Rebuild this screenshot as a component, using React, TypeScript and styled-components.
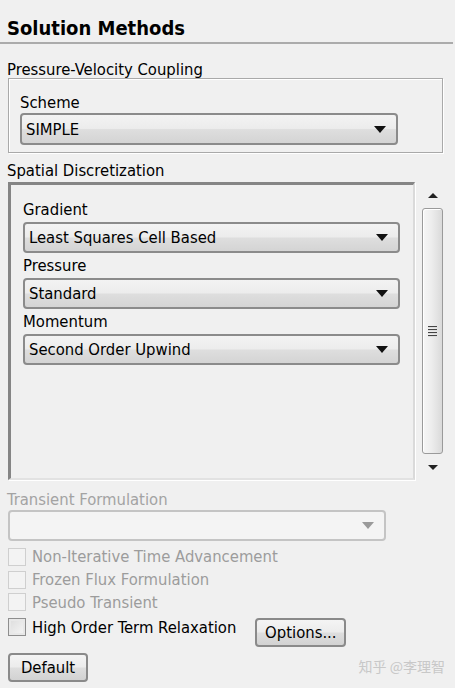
import React from 'react'
import styled, { createGlobalStyle } from 'styled-components'

const GlobalStyle = createGlobalStyle`
  html, body {
    margin: 0;
    padding: 0;
    background: #f0f0f0;
  }
  body {
    font-family: "DejaVu Sans Condensed", "DejaVu Sans", Tahoma, sans-serif;
    color: #000;
  }
`

const Page = styled.div`
  width: 455px;
  height: 688px;
  position: relative;
  overflow: hidden;
  background: #f0f0f0;
`

const Title = styled.div`
  height: 44px;
  padding-left: 7px;
  box-sizing: border-box;
  padding-top: 15px;
  font-size: 20px;
  font-weight: bold;
  line-height: 26px;
  border-bottom: 2px solid #ababab;
  margin-right: 2px;
`

const SectionLabel = styled.div<{ disabled?: boolean }>`
  padding-left: 7px;
  font-size: 16.5px;
  line-height: 19px;
  height: 18px;
  color: ${p => p.disabled ? '#a3a3a3' : '#000'};
`

const GroupBox = styled.div`
  margin-left: 8px;
  width: 435px;
  height: 75px;
  box-sizing: border-box;
  border: 1px solid #a9a9a9;
  box-shadow: inset 1px 1px 0 #fff, 1px 1px 0 #fff;
  padding: 14px 0 0 11px;
`

const FieldLabel = styled.div`
  font-size: 16.5px;
  line-height: 19px;
  height: 20px;
`

const Combo = styled.div<{ w: number, h?: number, disabled?: boolean }>`
  width: ${p => p.w}px;
  height: ${p => p.h ?? 31}px;
  box-sizing: border-box;
  border: 2px solid ${p => p.disabled ? '#c4c4c4' : '#8b8b8b'};
  border-radius: 4px;
  background: ${p => p.disabled
    ? '#f4f4f4'
    : 'linear-gradient(#f3f3f3 0%, #ececec 48%, #dedede 52%, #d4d4d4 100%)'};
  display: flex;
  align-items: center;
  justify-content: space-between;
  padding: 0 10px 0 4px;
  font-size: 16.5px;
  color: ${p => p.disabled ? '#a0a0a0' : '#000'};
`

const Arrow = styled.span<{ disabled?: boolean }>`
  width: 0;
  height: 0;
  border-left: 6px solid transparent;
  border-right: 6px solid transparent;
  border-top: 7px solid ${p => p.disabled ? '#9a9a9a' : '#111'};
`

const SpatialRow = styled.div`
  display: flex;
  gap: 7px;
  margin-left: 8px;
  margin-top: 3px;
  height: 298px;
`

const SunkenPanel = styled.div`
  width: 407px;
  box-sizing: border-box;
  border-top: 3px solid #858585;
  border-left: 3px solid #858585;
  border-right: 2px solid #dadada;
  border-bottom: 2px solid #e2e2e2;
  box-shadow: 1px 1px 0 #fff;
  padding: 15px 0 0 12px;
  display: flex;
  flex-direction: column;
`

const PanelLabel = styled.div`
  font-size: 16.5px;
  line-height: 19px;
  height: 19px;
  margin-bottom: 3px;
`

const FieldGap = styled.div`
  height: 3px;
`

const ScrollBar = styled.div`
  width: 21px;
  display: flex;
  flex-direction: column;
  align-items: center;
  background: #f0f0f0;
`

const ScrollBtn = styled.div`
  height: 26px;
  width: 21px;
  display: flex;
  align-items: center;
  justify-content: center;
`

const ArrowUp = styled.span`
  width: 0;
  height: 0;
  border-left: 5px solid transparent;
  border-right: 5px solid transparent;
  border-bottom: 5px solid #222;
`

const ArrowDown = styled.span`
  width: 0;
  height: 0;
  border-left: 5px solid transparent;
  border-right: 5px solid transparent;
  border-top: 5px solid #222;
`

const Thumb = styled.div`
  flex: 1;
  width: 21px;
  box-sizing: border-box;
  border: 1px solid #9a9a9a;
  border-radius: 3px;
  background: linear-gradient(90deg, #f6f6f6 0%, #ededed 45%, #dadada 100%);
  box-shadow: inset 1px 1px 0 #fff;
  display: flex;
  flex-direction: column;
  align-items: center;
  justify-content: center;
  gap: 2px;
`

const Grip = styled.span`
  width: 9px;
  height: 1px;
  background: #444;
  box-shadow: 0 1px 0 #ddd;
`

const TransientBlock = styled.div`
  margin-top: 10px;
`

const DisabledCombo = styled.div`
  margin-left: 8px;
  margin-top: 2px;
`

const CheckList = styled.div`
  margin-top: 4px;
  display: flex;
  flex-direction: column;
`

const CheckRow = styled.div<{ h: number }>`
  display: flex;
  align-items: center;
  height: ${p => p.h}px;
  padding-left: 8px;
`

const Box = styled.span<{ disabled?: boolean }>`
  width: 18px;
  height: 18px;
  box-sizing: border-box;
  border: 1px solid ${p => p.disabled ? '#cfcfcf' : '#8e8e8e'};
  background: ${p => p.disabled
    ? '#f3f3f3'
    : 'linear-gradient(135deg, #dcdcdc, #f6f6f6)'};
  box-shadow: ${p => p.disabled ? 'none' : 'inset 0 0 0 2px #e8e8e8'};
  margin-right: 6px;
  flex-shrink: 0;
`

const CheckText = styled.span<{ disabled?: boolean }>`
  font-size: 16.5px;
  color: ${p => p.disabled ? '#9c9c9c' : '#000'};
`

const Button = styled.button<{ w: number }>`
  width: ${p => p.w}px;
  height: 29px;
  box-sizing: border-box;
  border: 2px solid #8a8a8a;
  border-radius: 4px;
  background: linear-gradient(#f4f4f4 0%, #ececec 48%, #dedede 52%, #d2d2d2 100%);
  font-family: inherit;
  font-size: 16.5px;
  color: #000;
  padding: 0;
`

const OptionsBtn = styled(Button)`
  margin-left: 19px;
  margin-top: 10px;
`

const Footer = styled.div`
  margin-top: 12px;
  padding-left: 8px;
`

const Watermark = styled.div`
  position: absolute;
  right: 10px;
  bottom: 12px;
  font-family: "Noto Sans CJK SC", sans-serif;
  font-size: 14px;
  color: #c8c8c8;
`

const Dropdown: React.FC<{ value?: string, w: number, h?: number, disabled?: boolean }> = ({ value, w, h, disabled }) => (
  <Combo w={w} h={h} disabled={disabled}>
    <span>{value}</span>
    <Arrow disabled={disabled} />
  </Combo>
)

const App: React.FC = () => {
  return (
    <Page>
      <GlobalStyle />
      <Title>Solution Methods</Title>
      <div style={{ height: 16 }} />
      <SectionLabel>Pressure-Velocity Coupling</SectionLabel>
      <GroupBox>
        <FieldLabel>Scheme</FieldLabel>
        <Dropdown w={378} h={32} value="SIMPLE" />
      </GroupBox>
      <div style={{ height: 8 }} />
      <SectionLabel>Spatial Discretization</SectionLabel>
      <SpatialRow>
        <SunkenPanel>
          <PanelLabel>Gradient</PanelLabel>
          <Dropdown w={377} value="Least Squares Cell Based" />
          <FieldGap />
          <PanelLabel>Pressure</PanelLabel>
          <Dropdown w={377} value="Standard" />
          <FieldGap />
          <PanelLabel>Momentum</PanelLabel>
          <Dropdown w={377} value="Second Order Upwind" />
        </SunkenPanel>
        <ScrollBar>
          <ScrollBtn><ArrowUp /></ScrollBtn>
          <Thumb>
            <Grip />
            <Grip />
            <Grip />
            <Grip />
          </Thumb>
          <ScrollBtn><ArrowDown /></ScrollBtn>
        </ScrollBar>
      </SpatialRow>
      <TransientBlock>
        <SectionLabel disabled>Transient Formulation</SectionLabel>
        <DisabledCombo>
          <Dropdown w={378} disabled />
        </DisabledCombo>
      </TransientBlock>
      <CheckList>
        <CheckRow h={23}>
          <Box disabled />
          <CheckText disabled>Non-Iterative Time Advancement</CheckText>
        </CheckRow>
        <CheckRow h={23}>
          <Box disabled />
          <CheckText disabled>Frozen Flux Formulation</CheckText>
        </CheckRow>
        <CheckRow h={22}>
          <Box disabled />
          <CheckText disabled>Pseudo Transient</CheckText>
        </CheckRow>
        <CheckRow h={28}>
          <Box />
          <CheckText>High Order Term Relaxation</CheckText>
          <OptionsBtn w={91}>Options...</OptionsBtn>
        </CheckRow>
      </CheckList>
      <Footer>
        <Button w={80}>Default</Button>
      </Footer>
      <Watermark>知乎 @李理智</Watermark>
    </Page>
  )
}

export default App
